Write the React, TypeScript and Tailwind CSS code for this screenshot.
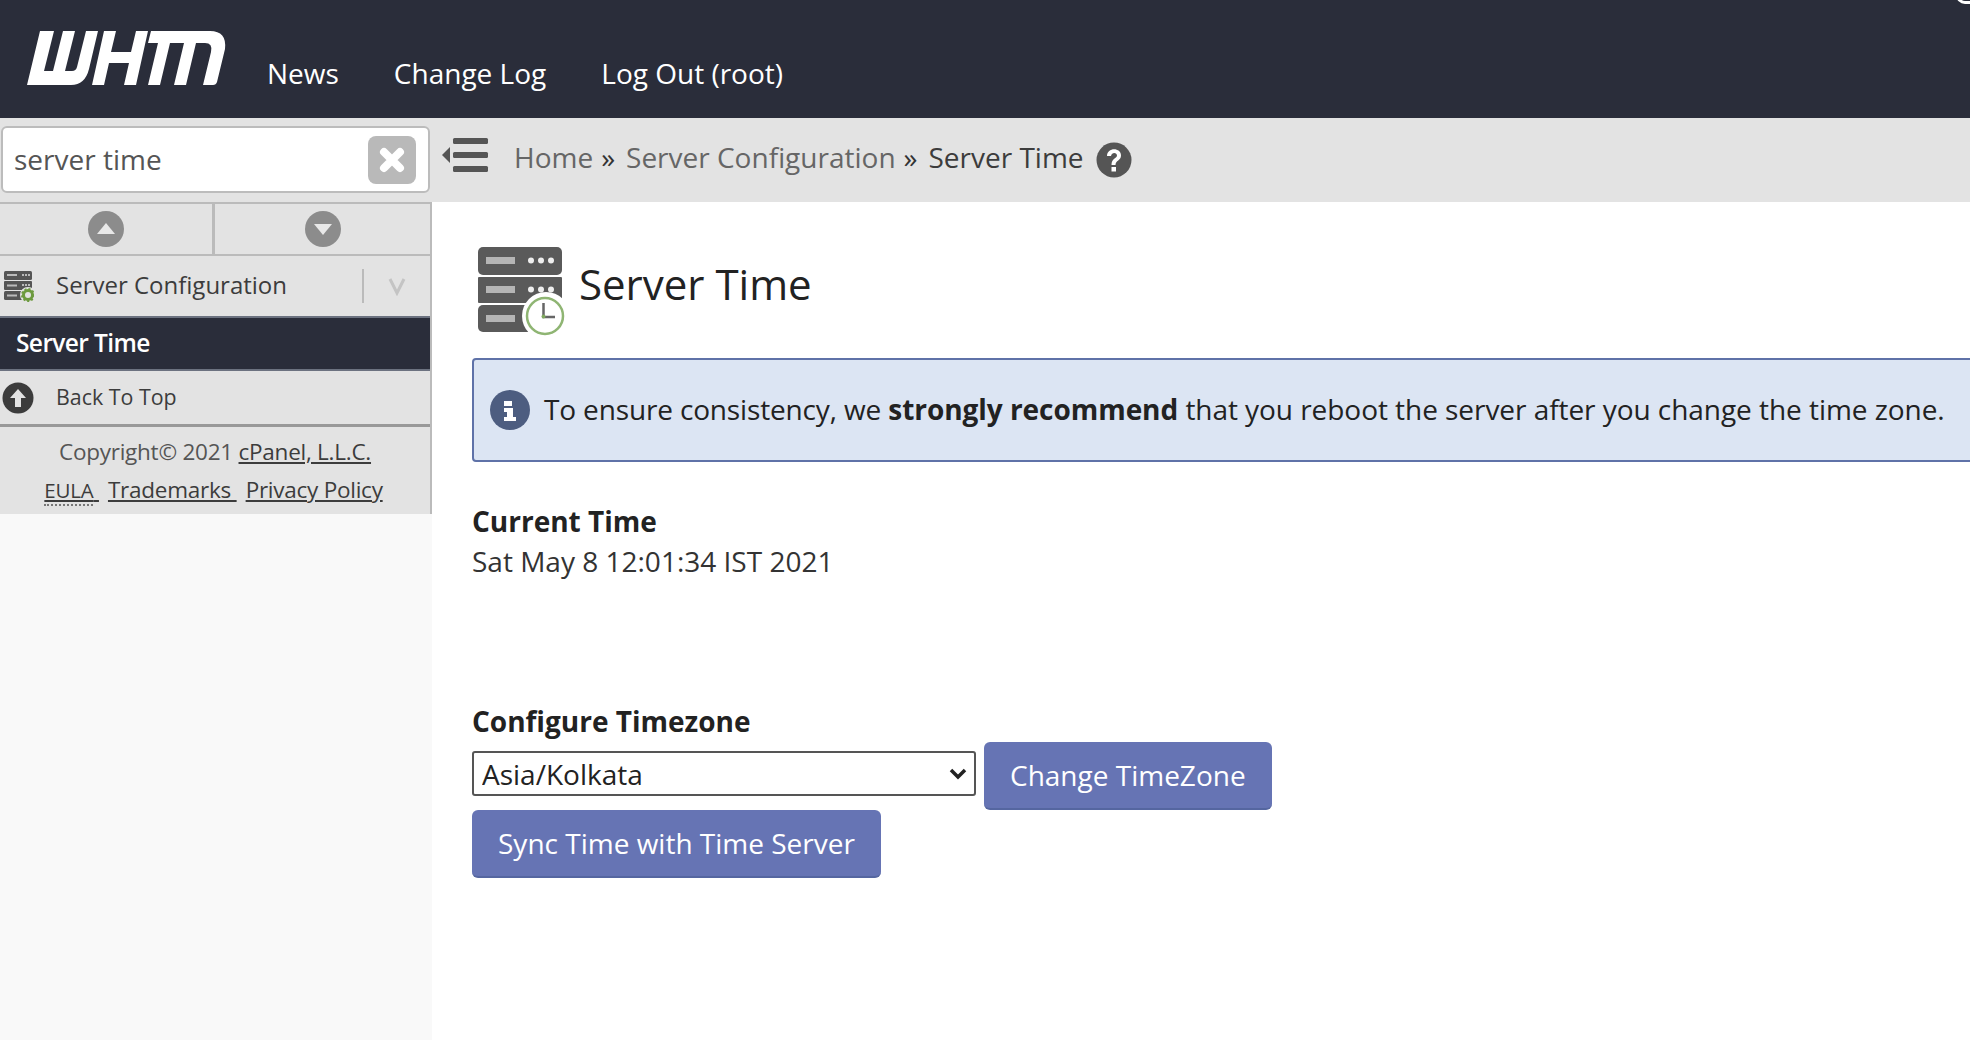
import React from "react";

function Logo() {
  return (
    <svg width="215" height="70" viewBox="0 0 215 70" className="block">
      <g fill="#fff">
        <path d="M7 63 L20 9 L34 9 L24 49 L33 49 L43 9 L55 9 L45 49 L52 49 Q56 49 57 45 L66 9 L78 9 L69 47 Q65 63 51 63 Z" />
        <path d="M84 9 L96 9 L91 30 L111 30 L116 9 L128 9 L116 63 L104 63 L109 41 L89 41 L84 63 L72 63 Z" />
        <path d="M131 9 L190 9 Q207 9 205 27 L197 60 Q196 63 193 63 L183 63 L191 30 Q193 21 185 21 L176 21 L166 63 L154 63 L164 21 L150 21 L140 63 L128 63 L138 21 L128 21 Z" />
      </g>
    </svg>
  );
}

function RowIcon() {
  return (
    <svg width="32" height="32" viewBox="0 0 32 32" className="block">
      <rect x="2" y="1" width="28" height="9" rx="1.5" fill="#555" />
      <rect x="2" y="11" width="28" height="9" rx="1" fill="#555" />
      <rect x="2" y="21" width="28" height="9" rx="1.5" fill="#555" />
      <rect x="5" y="4" width="10" height="2" fill="#bbb" />
      <rect x="5" y="14.5" width="10" height="2" fill="#bbb" />
      <rect x="5" y="24.5" width="10" height="2" fill="#bbb" />
      <circle cx="21" cy="5" r="1" fill="#ddd" />
      <circle cx="24" cy="5" r="1" fill="#ddd" />
      <circle cx="27" cy="5" r="1" fill="#ddd" />
      <circle cx="21" cy="15" r="1" fill="#ddd" />
      <circle cx="24" cy="15" r="1" fill="#ddd" />
      <circle cx="27" cy="15" r="1" fill="#ddd" />
      <circle cx="26" cy="25" r="8" fill="#e3e3e3" />
      <circle cx="26" cy="25" r="4.5" fill="none" stroke="#6d9a3f" strokeWidth="3" />
      <circle cx="26" cy="25" r="6" fill="none" stroke="#6d9a3f" strokeWidth="2" strokeDasharray="2 2" />
    </svg>
  );
}

function ServerClock() {
  return (
    <svg width="92" height="92" viewBox="0 0 92 92" className="block">
      <rect x="2" y="1" width="84" height="28" rx="5" fill="#5a5a5a" />
      <rect x="2" y="31" width="84" height="26" rx="1" fill="#5a5a5a" />
      <rect x="2" y="59" width="84" height="27" rx="5" fill="#5a5a5a" />
      <rect x="10" y="11" width="29" height="7" fill="#b5b5b5" />
      <rect x="10" y="40" width="29" height="7" fill="#b5b5b5" />
      <rect x="10" y="69" width="29" height="7" fill="#b5b5b5" />
      <circle cx="55" cy="14.500" r="3" fill="#eee" />
      <circle cx="65" cy="14.500" r="3" fill="#eee" />
      <circle cx="75" cy="14.500" r="3" fill="#eee" />
      <circle cx="55" cy="43.500" r="3" fill="#eee" />
      <circle cx="65" cy="43.500" r="3" fill="#eee" />
      <circle cx="75" cy="43.500" r="3" fill="#eee" />
      <circle cx="70" cy="70" r="24" fill="#fff" />
      <circle cx="69" cy="70" r="18" fill="#fff" stroke="#8fb573" strokeWidth="2.500" />
      <path d="M67.500 57 V71 H79" fill="none" stroke="#666" strokeWidth="2.500" />
      <circle cx="67.500" cy="70.500" r="2" fill="#7fa85f" />
    </svg>
  );
}

export default function App() {
  const font = "font-['Open_Sans',sans-serif]";
  return (
    <div className={`${font} relative flex h-[1040px] w-full flex-col overflow-hidden bg-white`}>
      <header className="relative flex h-[118px] shrink-0 bg-[#2a2d3a]">
        <div className="ml-[20px] mt-[22px]">
          <Logo />
        </div>
        <nav className="ml-[32px] mt-[51px] flex h-[44px] gap-[55px] text-[28px] leading-[44px] text-white">
          <span>News</span>
          <span>Change Log</span>
          <span>Log Out (root)</span>
        </nav>
        <div className="absolute right-[-8px] top-[-14px] h-[18px] w-[22px] rounded-full border-[3px] border-white" />
      </header>
      <div className="flex min-h-0 flex-1">
        <aside className="flex w-[432px] shrink-0 flex-col bg-[#f9f9f9]">
          <div className="h-[84px] bg-[#e3e3e3] pl-[1px] pr-[2px] pt-[8px]">
            <div className="flex h-[67px] items-center justify-between rounded-[6px] border-2 border-[#bcbcbc] bg-white pl-[11px] pr-[12px]">
              <span className="-mt-[2px] text-[28px] text-[#555]">server time</span>
              <div className="flex h-[48px] w-[48px] items-center justify-center rounded-[8px] bg-[#b9b9b9]">
                <svg width="30" height="30" viewBox="0 0 30 30">
                  <path d="M7 7 L23 23 M23 7 L7 23" stroke="#fff" strokeWidth="8" strokeLinecap="round" />
                </svg>
              </div>
            </div>
          </div>
          <div className="border-r-2 border-[#bbb] bg-[#e3e3e3]">
            <div className="flex h-[54px] border-y-2 border-[#bbb]">
              <div className="flex w-[215px] items-center justify-center border-r-[3px] border-[#bbb]">
                <svg width="38" height="38" viewBox="0 0 38 38">
                  <circle cx="19" cy="19" r="18" fill="#8c8c8c" />
                  <path d="M10 24 L19 13 L28 24 Z" fill="#e8e8e8" />
                </svg>
              </div>
              <div className="flex flex-1 items-center justify-center">
                <svg width="38" height="38" viewBox="0 0 38 38">
                  <circle cx="19" cy="19" r="18" fill="#8c8c8c" />
                  <path d="M10 14 L28 14 L19 25 Z" fill="#e8e8e8" />
                </svg>
              </div>
            </div>
            <div className="flex h-[60px] items-center">
              <div className="ml-[2px] w-[54px]">
                <RowIcon />
              </div>
              <span className="-mt-[2px] flex-1 text-[24px] text-[#3c3c3c]">Server Configuration</span>
              <div className="flex h-[34px] w-[68px] items-center justify-center border-l-2 border-[#bbb]">
                <svg width="20" height="20" viewBox="0 0 20 20">
                  <path d="M3 3 L10 17 L17 3" fill="none" stroke="#c4c4c4" strokeWidth="3" />
                </svg>
              </div>
            </div>
            <div className="flex h-[55px] items-center border-y-2 border-[#6c7280] bg-[#2a2d3a] pl-[16px] text-[24.500px] font-semibold tracking-[-0.6px] text-white">
              Server Time
            </div>
            <div className="flex h-[53px] items-center">
              <div className="ml-[2px] w-[54px]">
                <svg width="32" height="32" viewBox="0 0 32 32" className="block">
                  <circle cx="16" cy="16" r="15.500" fill="#3c3c3c" />
                  <path d="M16 7 L24 16 L19 16 L19 25 L13 25 L13 16 L8 16 Z" fill="#e3e3e3" />
                </svg>
              </div>
              <span className="text-[21.400px] text-[#3c3c3c]">Back To Top</span>
            </div>
            <div className="h-[90px] border-t-[3px] border-[#999] pt-[6px] text-center text-[22.500px] leading-[38px] tracking-[-0.25px] text-[#555]">
              <div>
                Copyright© 2021 <span className="text-[#3c3c3c] underline">cPanel, L.L.C.</span>
              </div>
              <div className="flex justify-center gap-[9px] pr-[3px] text-[#3c3c3c]">
                <span className="underline">
                  <span className="border-b-2 border-dotted border-[#777] text-[20.500px]">EULA</span>&nbsp;
                </span>
                <span className="underline">Trademarks&nbsp;</span>
                <span className="underline">Privacy Policy</span>
              </div>
            </div>
          </div>
        </aside>
        <main className="min-w-0 flex-1">
          <div className="flex h-[84px] items-center bg-[#e3e3e3] pb-[6px] text-[28px] text-[#666]">
            <svg width="48" height="36" viewBox="0 0 48 36" className="ml-[10px] mr-[24px] -mt-[4px] block">
              <rect x="11" y="1" width="35" height="6" rx="1.500" fill="#555" />
              <rect x="11" y="15" width="35" height="6" rx="1.500" fill="#555" />
              <rect x="11" y="29" width="35" height="6" rx="1.500" fill="#555" />
              <path d="M8 10 L8 26 L0 18 Z" fill="#555" />
            </svg>
            <span>Home</span>
            <span className="ml-[8px] text-[#333]">»</span>
            <span className="ml-[11px]">Server Configuration</span>
            <span className="ml-[8px] text-[#333]">»</span>
            <span className="ml-[11px] text-[#3c3c3c]">Server Time</span>
            <svg width="36" height="36" viewBox="0 0 36 36" className="ml-[12px] mt-[6px] block">
              <circle cx="18" cy="18" r="17.500" fill="#555" />
              <path d="M11 14 C11 5 25 5 25 13.500 C25 19 19.500 18 19.500 23 L15.500 23 C15.500 16 21 16.500 21 13.500 C21 10 15.500 10 15 14 Z" fill="#fff" />
              <rect x="15.500" y="25" width="4.500" height="4.500" fill="#fff" />
            </svg>
          </div>
          <div className="pl-[40px]">
            <div className="flex h-[156px] items-start pt-[44px]">
              <div className="ml-[4px]">
                <ServerClock />
              </div>
              <h1 className="ml-[11px] mt-[11px] text-[42px] leading-[54px] text-[#222]">Server Time</h1>
            </div>
            <div className="flex h-[104px] w-[1600px] items-center rounded-[4px] border-2 border-[#5f72a8] bg-[#dce5f3] pl-[16px] text-[28px] tracking-[-0.05px] text-[#222]">
              <svg width="40" height="40" viewBox="0 0 40 40" className="mr-[14px] block shrink-0">
                <circle cx="20" cy="20" r="20" fill="#4d5d80" />
                <path d="M14 11 H22 V16 H14 Z M14 18 H23 V27 H26 V31 H14 V27 H17 V22 H14 Z" fill="#fff" />
              </svg>
              <span className="-mt-[2px] whitespace-nowrap">
                <span className="tracking-[-0.15px]">To ensure consistency, we</span> <b className="font-bold">strongly recommend</b> that you reboot the server after you change the time zone.
              </span>
            </div>
            <div className="mt-[39px] text-[28px] font-bold leading-[41px] text-[#222]">Current Time</div>
            <div className="-mt-[1px] text-[28px] leading-[40px] text-[#333]">Sat May 8 12:01:34 IST 2021</div>
            <div className="mt-[120px] text-[28px] font-bold leading-[41px] text-[#222]">Configure Timezone</div>
            <div className="flex items-start">
              <div className="relative mt-[9px] h-[45px] w-[504px]">
                <select className="h-[45px] w-[504px] appearance-none rounded-[3px] border-2 border-[#555] bg-white pb-[2px] pl-[8px] text-[28px] text-[#222]" defaultValue="Asia/Kolkata">
                  <option>Asia/Kolkata</option>
                </select>
                <svg width="18" height="12" viewBox="0 0 18 12" className="pointer-events-none absolute right-[9px] top-[17px] block">
                  <path d="M2 2 L9 9 L16 2" fill="none" stroke="#222" strokeWidth="3.500" />
                </svg>
              </div>
              <button className="ml-[8px] h-[68px] rounded-[6px] border-b-2 border-[#5566a0] bg-[#6674b4] px-[26px] text-[28px] text-white">Change TimeZone</button>
            </div>
            <button className="block h-[68px] rounded-[6px] border-b-2 border-[#5566a0] bg-[#6674b4] px-[26px] text-[28px] text-white">Sync Time with Time Server</button>
          </div>
        </main>
      </div>
    </div>
  );
}
